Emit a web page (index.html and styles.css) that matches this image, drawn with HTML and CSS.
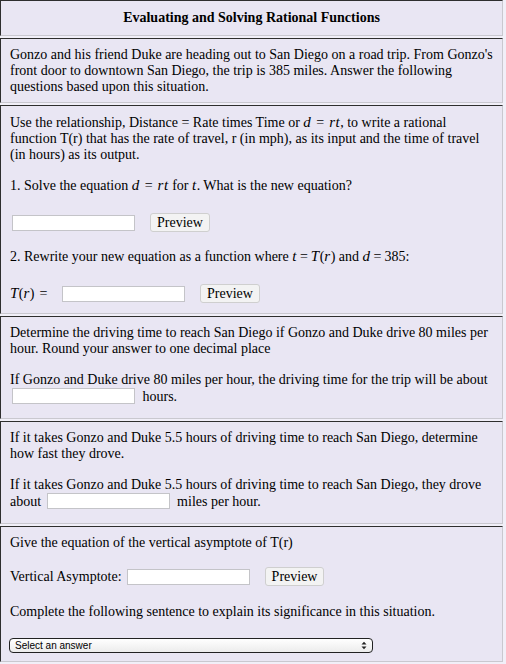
FILE: index.html
```html
<!DOCTYPE html>
<html>
<head>
<meta charset="utf-8">
<link rel="stylesheet" href="styles.css">
</head>
<body>
<div class="sheet">
  <div class="cell title">Evaluating and Solving Rational Functions</div>

  <div class="cell">
    <p class="first">Gonzo and his friend Duke are heading out to San Diego on a road trip. From Gonzo's front door to downtown San Diego, the trip is 385 miles. Answer the following questions based upon this situation.</p>
  </div>

  <div class="cell c3">
    <p class="first">Use the relationship, Distance = Rate times Time or <span class="m">d</span><span class="eq">=</span><span class="m">rt</span>, to write a rational function T(r) that has the rate of travel, r (in mph), as its input and the time of travel (in hours) as its output.</p>
    <p>1. Solve the equation <span class="m">d</span><span class="eq">=</span><span class="m">rt</span> for <span class="m">t</span>. What is the new equation?</p>
    <div class="row r1"><span class="box"></span><span class="btn">Preview</span></div>
    <p class="p2">2. Rewrite your new equation as a function where <span class="m">t</span><span class="eqs">=</span><span class="m">T</span>(<span class="m">r</span>) and <span class="m">d</span><span class="eqs">=</span>385:</p>
    <div class="row r2"><span class="tr"><span class="m">T</span>(<span class="m">r</span>)<span class="eq">=</span></span><span class="box"></span><span class="btn">Preview</span></div>
  </div>

  <div class="cell c4">
    <p class="first">Determine the driving time to reach San Diego if Gonzo and Duke drive 80 miles per hour. Round your answer to one decimal place</p>
    <p>If Gonzo and Duke drive 80 miles per hour, the driving time for the trip will be about <span class="box inl"></span> hours.</p>
  </div>

  <div class="cell c4">
    <p class="first">If it takes Gonzo and Duke 5.5 hours of driving time to reach San Diego, determine how fast they drove.</p>
    <p>If it takes Gonzo and Duke 5.5 hours of driving time to reach San Diego, they drove about <span class="box inl"></span> miles per hour.</p>
  </div>

  <div class="cell last">
    <p class="first">Give the equation of the vertical asymptote of T(r)</p>
    <div class="row r3"><span class="lbl">Vertical Asymptote:</span><span class="box"></span><span class="btn">Preview</span></div>
    <p class="p3">Complete the following sentence to explain its significance in this situation.</p>
    <div class="select"><span>Select an answer</span><svg class="arr" width="6" height="9" viewBox="0 0 6 9"><path d="M0.5 3.5 L3 0.8 L5.5 3.5 Z M0.5 5.5 L3 8.2 L5.5 5.5 Z" fill="#222"/></svg></div>
  </div>
</div>
</body>
</html>
```

FILE: styles.css
```css
html, body {
  margin: 0;
  padding: 0;
  background: #f1eff8;
}
.sheet {
  width: 503px;
  font-family: "Liberation Serif", "Times New Roman", serif;
  font-size: 14px;
  line-height: 16px;
  color: #000;
}
.cell {
  background: #e9e6f3;
  border: 1px solid;
  border-color: #2e2e2e #c9c8cf #c9c8cf #2e2e2e;
  padding: 8px 8px 7px 9px;
  margin-bottom: 2px;
}
.title {
  text-align: center;
  font-weight: bold;
  padding: 9px 8px 9px;
}
p {
  margin: 15px 0 0;
}
p.first {
  margin-top: 0;
}
.m {
  font-style: italic;
  font-family: "Liberation Serif", serif;
  font-size: 15px;
  letter-spacing: 0.5px;
}
.eq {
  padding: 0 5px;
}
.eqs {
  padding: 0 3px;
}
.row {
  display: flex;
  align-items: center;
}
.c3 p:nth-child(2) {
  margin-top: 14px;
}
.r1 {
  margin-top: 19px;
  height: 19px;
}
.p2 {
  margin-top: 16px;
}
.r2 {
  margin-top: 19px;
  height: 19px;
  margin-bottom: 3px;
}
.r3 {
  margin-top: 16px;
  height: 19px;
}
.p3 {
  margin-top: 18px;
}
.box {
  display: inline-block;
  width: 121px;
  height: 14px;
  background: #fff;
  border: 1px solid #c4c4c8;
  margin-left: 2px;
}
.inl {
  vertical-align: -3px;
  margin: 0 4px 0 2px;
}
.btn {
  display: inline-block;
  height: 17px;
  line-height: 17px;
  padding: 0 6px;
  margin-left: 15px;
  background: #f3f3f3;
  border: 1px solid #cfcfcf;
  border-radius: 3px;
}
.tr {
  width: 48px;
  margin-right: 2px;
}
.lbl {
  margin-right: 3px;
}
.c4 {
  padding-bottom: 13px;
}
.select {
  margin-top: 18px;
  margin-left: -1px;
  width: 352px;
  height: 13px;
  border: 1px solid #222;
  border-radius: 4px;
  background: linear-gradient(#ffffff, #ececec);
  font-family: "Liberation Sans", Arial, sans-serif;
  font-size: 10px;
  line-height: 13px;
  display: flex;
  justify-content: space-between;
  align-items: center;
  padding: 0 5px 0 5px;
}
.arr {
  display: block;
}
.last {
  padding-bottom: 8px;
}
```
